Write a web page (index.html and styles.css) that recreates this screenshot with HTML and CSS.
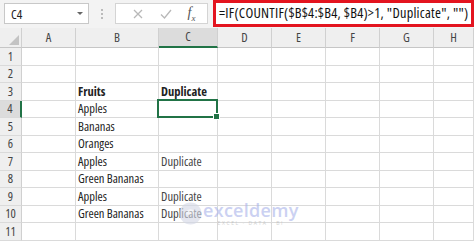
FILE: index.html
```html
<!DOCTYPE html>
<html>
<head>
  <link rel="stylesheet" href="styles.css">
</head>
<body>
  <div class="app">
    <div class="toolbar">
      <div class="namebox"><span>C4</span><span class="caret"></span></div>
      <div class="grip"><i></i><i></i><i></i></div>
      <div class="fxbtns">
        <svg class="btn" width="12" height="12" viewBox="0 0 12 12"><path d="M2 2 L10 10 M10 2 L2 10" stroke="#b8b8b8" stroke-width="1.3" fill="none"/></svg>
        <svg class="btn" width="14" height="12" viewBox="0 0 14 12"><path d="M2 6.5 L5.5 10 L12 2" stroke="#b8b8b8" stroke-width="1.3" fill="none"/></svg>
        <span class="fx">f<sub>x</sub></span>
      </div>
      <div class="formula">=IF(COUNTIF($B$4:$B4, $B4)&gt;1, "Duplicate", "")</div>
    </div>

    <div class="sheet">
      <div class="row head">
        <div class="corner"><span class="tri"></span></div>
        <div>A</div><div>B</div><div class="cur">C</div><div>D</div><div>E</div><div>F</div><div>G</div><div>H</div>
      </div>
      <div class="row"><div class="num">1</div><div></div><div></div><div></div><div></div><div></div><div></div><div></div><div></div></div>
      <div class="row"><div class="num">2</div><div></div><div></div><div></div><div></div><div></div><div></div><div></div><div></div></div>
      <div class="row"><div class="num">3</div><div></div><div class="b">Fruits</div><div class="b dup-col">Duplicate</div><div></div><div></div><div></div><div></div><div></div></div>
      <div class="row"><div class="num cur">4</div><div></div><div>Apples</div><div class="sel"></div><div></div><div></div><div></div><div></div><div></div></div>
      <div class="row"><div class="num">5</div><div></div><div>Bananas</div><div></div><div></div><div></div><div></div><div></div><div></div></div>
      <div class="row"><div class="num">6</div><div></div><div>Oranges</div><div></div><div></div><div></div><div></div><div></div><div></div></div>
      <div class="row"><div class="num">7</div><div></div><div>Apples</div><div class="dup">Duplicate</div><div></div><div></div><div></div><div></div><div></div></div>
      <div class="row"><div class="num">8</div><div></div><div>Green Bananas</div><div></div><div></div><div></div><div></div><div></div><div></div></div>
      <div class="row"><div class="num">9</div><div></div><div>Apples</div><div class="dup">Duplicate</div><div></div><div></div><div></div><div></div><div></div></div>
      <div class="row"><div class="num">10</div><div></div><div>Green Bananas</div><div class="dup">Duplicate</div><div></div><div></div><div></div><div></div><div></div></div>
      <div class="row"><div class="num">11</div><div></div><div></div><div></div><div></div><div></div><div></div><div></div><div></div></div>

      <div class="mark">
        <svg width="23" height="23" viewBox="0 0 24 24"><circle cx="12" cy="12" r="11.5" fill="#d3d7e6"/><path d="M6.5 13 a5.5 5.5 0 1 1 11 0 z" fill="#eef0f6"/></svg>
        <div class="mark-text">
          <span class="brand">exceldemy</span>
          <span class="tag">EXCEL · DATA · BI</span>
        </div>
      </div>
    </div>
  </div>
</body>
</html>
```

FILE: styles.css
```css
body {
  margin: 0;
  background: #fff;
  font-family: "Open Sans", "Liberation Sans", sans-serif;
  font-stretch: 87.5%;
  color: #222;
}

.app {
  width: 474px;
  height: 242px;
  overflow: hidden;
}

/* formula bar */
.toolbar {
  height: 28px;
  background: #f3f3f3;
  display: flex;
  align-items: flex-start;
}

.namebox {
  margin: 3px 0 0 4px;
  width: 85px;
  height: 21px;
  box-sizing: border-box;
  background: #fff;
  border: 1px solid #c8c8c8;
  display: flex;
  align-items: center;
  justify-content: space-between;
  padding: 0 5px 0 6px;
  font-size: 13px;
}

.caret {
  width: 0;
  height: 0;
  border-left: 3px solid transparent;
  border-right: 3px solid transparent;
  border-top: 3px solid #666;
}

.grip {
  width: 26px;
  display: flex;
  flex-direction: column;
  align-items: center;
  gap: 2px;
  padding-top: 9px;
}

.grip i {
  width: 2px;
  height: 2px;
  background: #bbb;
}

.fxbtns {
  margin-top: 3px;
  width: 93px;
  height: 21px;
  box-sizing: border-box;
  background: #fff;
  border: 1px solid #d4d4d4;
  display: flex;
  align-items: center;
  justify-content: space-around;
  padding: 0 4px 0 8px;
}

.fx {
  font-family: "Liberation Serif", serif;
  font-style: italic;
  font-size: 14px;
  color: #555;
}

.fx sub {
  font-size: 9px;
}

.formula {
  margin-left: 5px;
  flex: 1;
  height: 27px;
  box-sizing: border-box;
  border: 3px solid #e3141f;
  background: #fff;
  font-size: 14.3px;
  letter-spacing: 0.25px;
  line-height: 20px;
  padding-left: 3px;
  white-space: nowrap;
  overflow: hidden;
  color: #111;
}

/* grid */
.sheet {
  position: relative;
}

.row {
  display: grid;
  grid-template-columns: 22px 54px 83px 59px 54px 54px 54px 54px 40px;
  height: 17.5px;
}

.row > div {
  box-sizing: border-box;
  border-right: 1px solid #dadada;
  border-bottom: 1px solid #dadada;
  font-size: 12.5px;
  line-height: 16px;
  padding-left: 2px;
  white-space: nowrap;
  display: flex;
  align-items: flex-end;
}

.row.head {
  height: 20px;
  background: #efefef;
}

.row.head > div {
  justify-content: center;
  align-items: center;
  padding: 0;
  color: #444;
  border-right-color: #d0d0d0;
  border-bottom-color: #c6c6c6;
}

.row.head > div.cur {
  background: #dcdcdc;
  border-bottom: 2px solid #217346;
}

.corner {
  position: relative;
}

.tri {
  position: absolute;
  right: 2px;
  bottom: 2px;
  width: 0;
  height: 0;
  border-left: 10px solid transparent;
  border-bottom: 10px solid #c3c3c3;
}

.row > div.num {
  background: #efefef;
  color: #444;
  justify-content: center;
  padding: 0;
  border-right-color: #d0d0d0;
}

.row > div.num.cur {
  background: #dcdcdc;
  border-right: 2px solid #217346;
}

.b {
  font-weight: bold;
}

.dup-col {
  padding-left: 3px;
}

.dup {
  color: #444;
  padding-left: 3px;
}

.sel {
  position: relative;
}

.sel::after {
  content: "";
  position: absolute;
  left: -2px;
  top: -2px;
  right: -1px;
  bottom: -1px;
  border: 2px solid #217346;
}

.sel::before {
  content: "";
  position: absolute;
  right: -3px;
  bottom: -3px;
  width: 5px;
  height: 5px;
  background: #217346;
  border: 1px solid #fff;
  z-index: 1;
}

/* watermark, semi-transparent over the cells */
.mark {
  position: absolute;
  left: 179px;
  top: 172px;
  display: flex;
  align-items: center;
  gap: 1px;
  opacity: 0.6;
}

.mark-text {
  display: flex;
  flex-direction: column;
  align-items: center;
}

.brand {
  font-size: 18px;
  font-weight: 600;
  font-stretch: 100%;
  color: #a9b3ea;
  line-height: 20px;
  letter-spacing: 0.3px;
}

.tag {
  font-size: 5px;
  font-stretch: 100%;
  color: #b5b5b5;
  letter-spacing: 1.6px;
  line-height: 6px;
}
```
